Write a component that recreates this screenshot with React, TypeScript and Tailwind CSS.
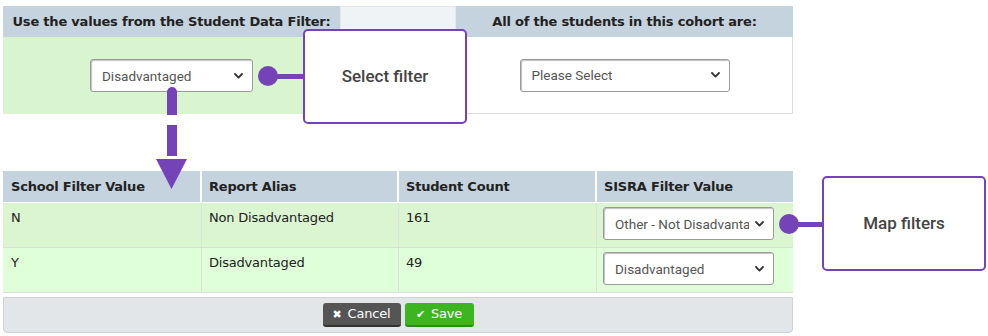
import React from "react";

const Chevron = () => (
  <svg width="9" height="6" viewBox="0 0 9 6" className="shrink-0">
    <path d="M1 1 L4.5 4.6 L8 1" fill="none" stroke="#333" strokeWidth="1.8" strokeLinecap="round" strokeLinejoin="round" />
  </svg>
);

function FakeSelect({ text, w, h = 33 }: { text: string; w: number; h?: number }) {
  return (
    <div
      className="flex items-center justify-between bg-white border border-[#9a9a9a] rounded-[3px] pl-[11px] pr-[9px] shadow-[inset_1px_1px_1px_rgba(0,0,0,0.25)] overflow-hidden"
      style={{ width: w, height: h }}
    >
      <span className="text-[13.5px] text-[#555] whitespace-nowrap overflow-hidden font-['Roboto',sans-serif] leading-[20px] tracking-normal">{text}</span>
      <span className="ml-[4px] bg-white pl-[2px]"><Chevron /></span>
    </div>
  );
}

function Callout({ text, className }: { text: string; className: string }) {
  return (
    <div className={"absolute bg-white border-2 border-[#7443b8] rounded-[5px] flex items-center justify-center " + className}>
      <span className="font-['Roboto',sans-serif] text-[17px] font-medium text-[#444] tracking-normal">{text}</span>
    </div>
  );
}

export default function App() {
  return (
    <div className="relative w-[988px] h-[336px] bg-white overflow-hidden font-['DejaVu_Sans','Verdana',sans-serif] text-[13px] text-[#222] tracking-[-0.2px]">
      {/* Top section */}
      <div className="ml-[3px] mt-[6px] w-[790px]">
        <div className="grid grid-cols-[337px_116px_337px] h-[31px] bg-[#c5d3df]">
          <div className="flex items-center justify-center font-bold text-[#222]">Use the values from the Student Data Filter:</div>
          <div className="bg-[#eff3f6] border border-[#e2e8ee]"></div>
          <div className="flex items-center justify-center font-bold text-[#222]">All of the students in this cohort are:</div>
        </div>
        <div className="grid grid-cols-[337px_116px_337px] h-[77px]">
          <div className="bg-[#d9f5d0] flex items-center justify-center">
            <FakeSelect text="Disadvantaged" w={163} />
          </div>
          <div className="bg-white"></div>
          <div className="bg-white border border-t-0 border-[#dcdcdc] flex items-center justify-center">
            <FakeSelect text="Please Select" w={210} />
          </div>
        </div>
      </div>

      {/* Bottom table */}
      <div className="ml-[3px] mt-[57px] w-[790px]">
        <div className="grid grid-cols-[199px_197px_198px_196px] h-[32px] bg-[#c5d3df] border-b border-white">
          <div className="flex items-center pl-[8px] font-bold border-r-2 border-white">School Filter Value</div>
          <div className="flex items-center pl-[7px] font-bold border-r-2 border-white">Report Alias</div>
          <div className="flex items-center pl-[7px] font-bold border-r-2 border-white">Student Count</div>
          <div className="flex items-center pl-[7px] font-bold">SISRA Filter Value</div>
        </div>
        <div className="grid grid-cols-[199px_197px_198px_196px] h-[45px] bg-[#daf5d0] border-b border-[#d6e2d3]">
          <div className="pl-[8px] pt-[5px] border-r border-[#d9e4d6]">N</div>
          <div className="pl-[7px] pt-[5px] border-r border-[#d9e4d6]">Non Disadvantaged</div>
          <div className="pl-[7px] pt-[5px] border-r border-[#d9e4d6]">161</div>
          <div className="pl-[6px] pt-[4px]"><FakeSelect text="Other - Not Disadvantaged" w={171} /></div>
        </div>
        <div className="grid grid-cols-[199px_197px_198px_196px] h-[45px] bg-[#dfffd8] border-b border-[#d6e0d6]">
          <div className="pl-[8px] pt-[5px] border-r border-[#d9e4d6]">Y</div>
          <div className="pl-[7px] pt-[5px] border-r border-[#d9e4d6]">Disadvantaged</div>
          <div className="pl-[7px] pt-[5px] border-r border-[#d9e4d6]">49</div>
          <div className="pl-[6px] pt-[4px]"><FakeSelect text="Disadvantaged" w={171} /></div>
        </div>
        <div className="mt-[4px] h-[36px] bg-[#e3e6e8] border border-[#cfd3d6] rounded-b-[4px] flex items-center justify-center gap-[4px]">
          <div className="h-[24px] w-[78px] bg-[#555555] rounded-[3px] border-b-2 border-[#333] flex items-center justify-center gap-[6px] text-white">
            <span className="text-[11px] font-bold leading-none">✖</span>
            <span>Cancel</span>
          </div>
          <div className="h-[24px] w-[69px] bg-[#3cb521] rounded-[3px] border-b-2 border-[#2d8a19] flex items-center justify-center gap-[6px] text-white">
            <span className="text-[11px] font-bold leading-none">✔</span>
            <span>Save</span>
          </div>
        </div>
      </div>

      {/* Overlay: select filter callout */}
      <div className="absolute left-[258px] top-[66px] w-[20px] h-[20px] rounded-full bg-[#7443b8]"></div>
      <div className="absolute left-[275px] top-[74px] w-[30px] h-[5px] bg-[#7443b8]"></div>
      <Callout text="Select filter" className="left-[303px] top-[29px] w-[164px] h-[95px]" />

      {/* Overlay: dashed arrow */}
      <div className="absolute left-[167px] top-[87px] w-[10px] h-[28px] bg-[#7443b8] rounded-t-full"></div>
      <div className="absolute left-[167px] top-[125px] w-[10px] h-[31px] bg-[#7443b8]"></div>
      <svg className="absolute left-[156px] top-[159px]" width="31" height="30" viewBox="0 0 31 30">
        <polygon points="0,0 31,0 15.5,30" fill="#7443b8" />
      </svg>

      {/* Overlay: map filters callout */}
      <div className="absolute left-[779px] top-[214px] w-[20px] h-[20px] rounded-full bg-[#7443b8]"></div>
      <div className="absolute left-[795px] top-[222px] w-[29px] h-[5px] bg-[#7443b8]"></div>
      <Callout text="Map filters" className="left-[822px] top-[176px] w-[164px] h-[95px]" />
    </div>
  );
}
